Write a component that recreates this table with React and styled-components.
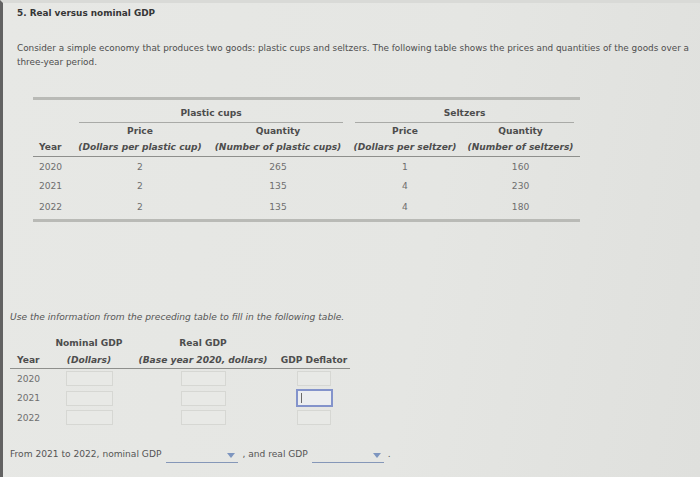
import React from 'react'
import styled, { createGlobalStyle } from 'styled-components'

const Global = createGlobalStyle`
  body {
    margin: 0;
    font-family: "DejaVu Sans", Verdana, sans-serif;
  }
`;

const Page = styled.div`
  box-sizing: border-box;
  width: 700px;
  height: 477px;
  overflow: hidden;
  background: linear-gradient(100deg, #e7e8e5 0%, #e5e6e3 60%, #dfe0dd 100%);
  border-left: 3px solid #626262;
  border-top: 3px solid #d9dad7;
  color: #505050;
  font-size: 9.1px;
`;

const Title = styled.h1`
  margin: 0;
  padding: 4px 0 0 14px;
  font-size: 8.9px;
  line-height: 12px;
  font-weight: bold;
  color: #363636;
`;

const Intro = styled.p`
  margin: 22px 0 0 14px;
  width: 680px;
  font-size: 8.85px;
  line-height: 14px;
  color: #4e4e4e;
`;

const Table = styled.table`
  border-collapse: collapse;
  table-layout: fixed;
  width: ${p => p.$width}px;
  margin: ${p => p.$margin};
  border-top: ${p => (p.$ruled ? '3px solid #b9bab6' : 'none')};
  border-bottom: ${p => (p.$ruled ? '3px solid #b9bab6' : 'none')};
`;

const Th = styled.th`
  padding: 0 ${p => p.$pad || 0}px;
  height: ${p => p.$h}px;
  font-weight: bold;
  font-style: ${p => (p.$italic ? 'italic' : 'normal')};
  text-align: ${p => p.$align || 'center'};
  color: #4d4d4d;
  white-space: nowrap;
  vertical-align: ${p => p.$valign || 'middle'};
  border-bottom: ${p => (p.$rule ? '1px solid #8e8f8c' : 'none')};
`;

const Group = styled.div`
  margin: 0 6px;
  padding: 7px 0 3px;
  border-bottom: 1px solid #a9aaa7;
  line-height: 12px;
`;

const Td = styled.td`
  padding: 0 ${p => p.$pad || 0}px;
  height: ${p => p.$h}px;
  text-align: ${p => p.$align || 'center'};
  color: #6e6e6e;
  vertical-align: middle;
`;

const Section = styled.div`
  padding-left: 7px;
`;

const Prompt = styled.p`
  margin: 88px 0 0;
  font-style: italic;
  line-height: 14px;
  color: #555;
`;

const Box = styled.div`
  box-sizing: border-box;
  margin: 0 auto;
  width: ${p => p.$w}px;
  height: 15px;
  border: 1px solid #d6d7d3;
  background: #e8e9e6;
`;

const ActiveBox = styled.div`
  box-sizing: border-box;
  margin: 0 auto;
  width: 37px;
  height: 18px;
  border: 2px solid #8393cb;
  background: #eceef0;
  display: flex;
  align-items: center;
  padding-left: 3px;
`;

const Caret = styled.span`
  width: 1px;
  height: 10px;
  background: #6a6a6a;
`;

const Sentence = styled.div`
  margin: 18px 0 0;
  display: flex;
  align-items: center;
  color: #555;
  line-height: 14px;
  white-space: pre;
`;

const Dropdown = styled.span`
  box-sizing: border-box;
  display: inline-flex;
  justify-content: flex-end;
  align-items: center;
  width: 72px;
  height: 14px;
  margin: 3px 4px 0 ${p => p.$left}px;
  border-bottom: 1px solid #8597b8;
`;

const Arrow = styled.span`
  width: 0;
  height: 0;
  margin-right: 3px;
  border-left: 4px solid transparent;
  border-right: 4px solid transparent;
  border-top: 5px solid #7d95bf;
`;

const goods = [
  ['2020', '2', '265', '1', '160'],
  ['2021', '2', '135', '4', '230'],
  ['2022', '2', '135', '4', '180'],
]

const Inputs = ({ active }) => (
  <>
    <Td><Box $w={47} /></Td>
    <Td><Box $w={45} /></Td>
    <Td>{active ? <ActiveBox><Caret /></ActiveBox> : <Box $w={34} />}</Td>
  </>
)

export default function App() {
  return (
    <Page>
      <Global />
      <Title>5. Real versus nominal GDP</Title>
      <Intro>
        Consider a simple economy that produces two goods: plastic cups and seltzers. The following table shows the prices and quantities of the goods over a three-year period.
      </Intro>

      <Table $width={547} $margin="28px 0 0 30px" $ruled>
        <colgroup>
          <col style={{ width: 40 }} />
          <col style={{ width: 134 }} />
          <col style={{ width: 142 }} />
          <col style={{ width: 112 }} />
          <col style={{ width: 119 }} />
        </colgroup>
        <thead>
          <tr>
            <Th $h={24} />
            <Th colSpan={2} $valign="top"><Group>Plastic cups</Group></Th>
            <Th colSpan={2} $valign="top"><Group>Seltzers</Group></Th>
          </tr>
          <tr>
            <Th $h={14} />
            <Th>Price</Th>
            <Th>Quantity</Th>
            <Th>Price</Th>
            <Th>Quantity</Th>
          </tr>
          <tr>
            <Th $h={18} $rule $align="left" $pad={6}>Year</Th>
            <Th $rule $italic>(Dollars per plastic cup)</Th>
            <Th $rule $italic>(Number of plastic cups)</Th>
            <Th $rule $italic>(Dollars per seltzer)</Th>
            <Th $rule $italic>(Number of seltzers)</Th>
          </tr>
        </thead>
        <tbody>
          {goods.map(([year, ...vals], i) => (
            <tr key={year}>
              <Td $h={i === 2 ? 24 : 19} $align="left" $pad={6}>{year}</Td>
              {vals.map((v, j) => <Td key={j}>{v}</Td>)}
            </tr>
          ))}
        </tbody>
      </Table>

      <Section>
        <Prompt>Use the information from the preceding table to fill in the following table.</Prompt>

        <Table $width={340} $margin="11px 0 0 0">
          <colgroup>
            <col style={{ width: 40 }} />
            <col style={{ width: 78 }} />
            <col style={{ width: 150 }} />
            <col style={{ width: 72 }} />
          </colgroup>
          <thead>
            <tr>
              <Th $h={16} />
              <Th>Nominal GDP</Th>
              <Th>Real GDP</Th>
              <Th />
            </tr>
            <tr>
              <Th $h={17} $rule $align="left" $pad={7}>Year</Th>
              <Th $rule $italic>(Dollars)</Th>
              <Th $rule $italic>(Base year 2020, dollars)</Th>
              <Th $rule>GDP Deflator</Th>
            </tr>
          </thead>
          <tbody>
            {['2020', '2021', '2022'].map(year => (
              <tr key={year}>
                <Td $h={19.5} $align="left" $pad={7}>{year}</Td>
                <Inputs active={year === '2021'} />
              </tr>
            ))}
          </tbody>
        </Table>

        <Sentence>
          From 2021 to 2022, nominal GDP
          <Dropdown $left={5}><Arrow /></Dropdown>
          , and real GDP
          <Dropdown $left={4}><Arrow /></Dropdown>
          .
        </Sentence>
      </Section>
    </Page>
  );
}
